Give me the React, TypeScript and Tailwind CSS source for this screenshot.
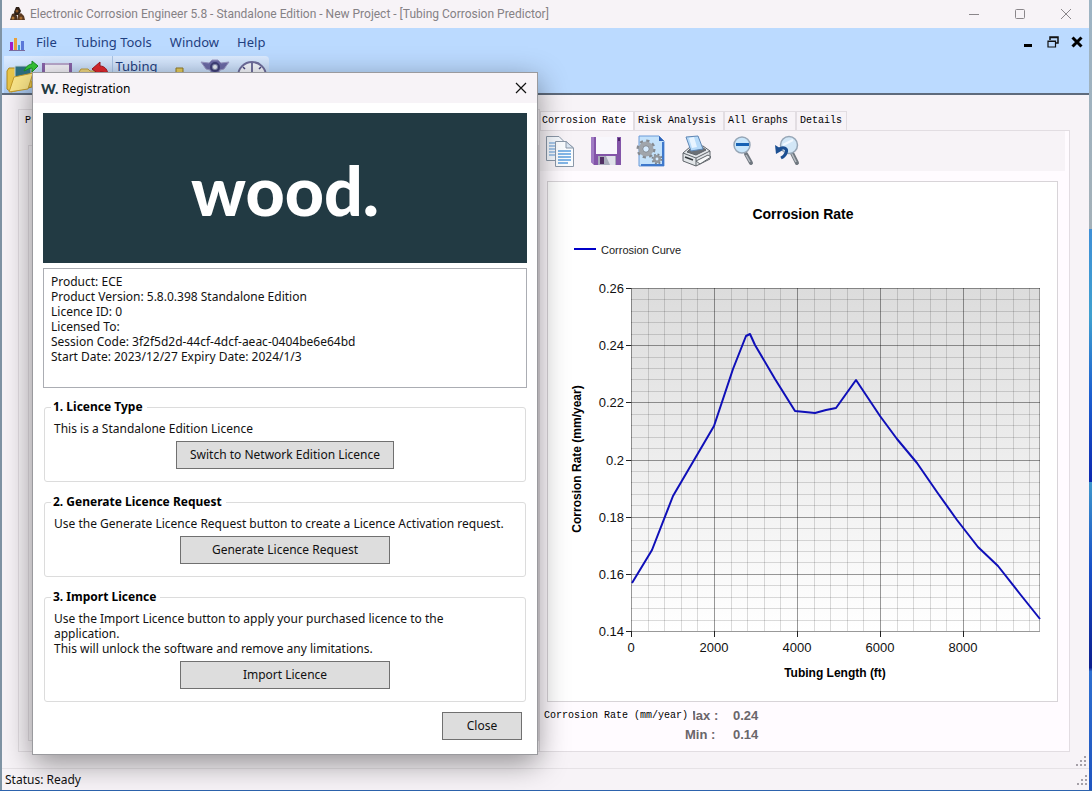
import React from "react";

const UI = "font-['Noto_Sans',sans-serif]";
const MONO = "font-['Liberation_Mono',monospace]";

const curve: [number, number][] = [
  [632, 583], [652, 550], [673, 496], [714, 426], [733, 369], [746, 336], [750, 334], [755, 345],
  [775, 379], [795, 411], [815, 413], [826, 410], [836, 408], [856, 380], [880, 416], [897, 439],
  [917, 463], [937, 492], [957, 520], [978, 547], [998, 566], [1020, 594], [1040, 619],
];
const yLabels = ["0.26", "0.24", "0.22", "0.2", "0.18", "0.16", "0.14"];
const xLabels = ["0", "2000", "4000", "6000", "8000"];
const yLine = (i: number) => Math.round(288 + (i * 343) / 30) + 0.5;
const xLine = (i: number) => Math.round(631 + i * 16.6) + 0.5;

function Chart() {
  const rows = Array.from({ length: 31 }, (_, i) => i);
  const cols = Array.from({ length: 25 }, (_, i) => i);
  return (
    <svg viewBox="548 182 509 519" className="block h-full w-full font-['Liberation_Sans',sans-serif]" role="img" aria-label="Corrosion Rate chart">
      <defs>
        <linearGradient id="plot" x1="0" y1="0" x2="0" y2="1">
          <stop offset="0" stopColor="#dcdcdc" />
          <stop offset="1" stopColor="#ffffff" />
        </linearGradient>
      </defs>
      <text x="803" y="219" textAnchor="middle" fontSize="14" fontWeight="700">Corrosion Rate</text>
      <path d="M574 249H596" stroke="#0000c8" strokeWidth="2" />
      <text x="601" y="254" fontSize="11" fill="#222">Corrosion Curve</text>
      <rect x="631" y="288" width="409" height="343" fill="url(#plot)" />
      {rows.map((i) => (
        <path key={i} d={`M631 ${yLine(i)}H1040`} stroke="#000" strokeOpacity={i % 5 ? 0.14 : 0.4} />
      ))}
      {cols.map((i) => (
        <path key={i} d={`M${xLine(i)} 288V631`} stroke="#000" strokeOpacity={i % 5 ? 0.14 : 0.4} />
      ))}
      <path d="M1039.500 288V631" stroke="#000" strokeOpacity="0.3" />
      {yLabels.map((t, i) => (
        <g key={t}>
          <path d={`M626 ${yLine(i * 5)}H631`} stroke="#222" />
          <text x="624" y={yLine(i * 5) + 4} textAnchor="end" fontSize="13" fill="#111">{t}</text>
        </g>
      ))}
      {xLabels.map((t, i) => (
        <g key={t}>
          <path d={`M${xLine(i * 5)} 631V637`} stroke="#222" />
          <text x={631 + i * 83} y="652" textAnchor="middle" fontSize="13" fill="#111">{t}</text>
        </g>
      ))}
      <polyline points={curve.map((p) => p.join(",")).join(" ")} fill="none" stroke="#0f0fb8" strokeWidth="2" strokeLinejoin="round" />
      <text x="835" y="677" textAnchor="middle" fontSize="12" fontWeight="700">Tubing Length (ft)</text>
      <text transform="translate(581 459) rotate(-90)" textAnchor="middle" fontSize="12" fontWeight="700">Corrosion Rate (mm/year)</text>
    </svg>
  );
}

const CopyIcon = () => (
  <svg viewBox="0 0 32 32" className="size-8">
    <g stroke="#8b98a8" strokeWidth="1">
      <path d="M1.500 1.500H14L18.500 6V25.500H1.500Z" fill="#f6faff" />
      <path d="M4 8H11M4 11H11M4 14H11M4 17H11M4 20H11" stroke="#8fb8e4" strokeWidth="1.500" />
      <path d="M10.500 6.500H21L28.500 13V31.500H10.500Z" fill="#fbfdff" />
      <path d="M21 6.500V13H28.500Z" fill="#dbe6f2" />
      <path d="M13 16H26M13 19H26M13 22H26M13 25H26M13 28H23" stroke="#5c9fe0" strokeWidth="1.500" />
    </g>
  </svg>
);
const SaveIcon = () => (
  <svg viewBox="0 0 32 32" className="size-8">
    <path d="M1 2H31V30H4L1 27Z" fill="#8355a8" />
    <path d="M1 2H4V29L1 27Z" fill="#a07cc4" />
    <path d="M6 2H27V19H6Z" fill="#f8f7fc" />
    <path d="M28 3H30V6H28Z" fill="#4b2468" />
    <path d="M8 21H26V30H8Z" fill="#a9adbb" />
    <path d="M10 22H14V29H10Z" fill="#513064" />
    <path d="M16 21L20 30H25V21Z" fill="#e0e2ea" />
  </svg>
);
const GearDocIcon = () => (
  <svg viewBox="0 0 32 32" className="size-8">
    <path d="M4 1H24L29 6V31H4Z" fill="#c4e2fb" stroke="#6a9ad8" />
    <path d="M24 1V6H29Z" fill="#2f62b8" />
    <path d="M28 7V30H6" fill="none" stroke="#3f78cc" strokeWidth="2" />
    <circle cx="11" cy="14" r="8" fill="none" stroke="#858a90" strokeWidth="3" strokeDasharray="3.100 3.180" />
    <circle cx="11" cy="14" r="5.500" fill="#e4e8ec" stroke="#a0a5ab" strokeWidth="4" />
    <circle cx="11" cy="14" r="3.300" fill="#d7ecff" stroke="#7a7f85" />
    <circle cx="22" cy="24" r="4.500" fill="none" stroke="#7c8187" strokeWidth="2" strokeDasharray="1.800 1.730" />
    <circle cx="22" cy="24" r="2.700" fill="#d7ecff" stroke="#92979d" strokeWidth="2.500" />
  </svg>
);
const PrintIcon = () => (
  <svg viewBox="0 0 32 32" className="size-8" stroke="#5f646a" strokeLinejoin="round">
    <path d="M3 18L10 12L23 11L30 16V24L16 31L3 26Z" fill="#e2e5e8" />
    <path d="M7 17L11 13L22 12L26 15L16 20Z" fill="#6b7076" />
    <path d="M6 2L18 1L23 14L11 16Z" fill="#b7dbfa" stroke="#5f86b4" />
    <path d="M9 3L14 2L17 12L12 13Z" fill="#e8f4ff" stroke="none" />
    <path d="M3 18L16 23L30 16M16 23V31" fill="none" />
    <path d="M16 26L28 20L31 22L20 29Z" fill="#f7f8f9" />
    <path d="M5 22L13 25" stroke="#33383d" strokeWidth="1.500" />
  </svg>
);
const ZoomOutIcon = () => (
  <svg viewBox="0 0 32 32" className="size-8">
    <path d="M21 19L26 28" stroke="#70777f" strokeWidth="4" strokeLinecap="round" />
    <path d="M21 20L25 27" stroke="#b8bdc4" strokeWidth="1.500" />
    <circle cx="17" cy="10" r="8" fill="#c9e6fb" stroke="#97a6b6" strokeWidth="1.500" />
    <path d="M11 8H24V11H11Z" fill="#1762b4" />
  </svg>
);
const ZoomUndoIcon = () => (
  <svg viewBox="0 0 32 32" className="size-8">
    <path d="M22 18L27 28" stroke="#70777f" strokeWidth="4" strokeLinecap="round" />
    <path d="M22 19L26 27" stroke="#b8bdc4" strokeWidth="1.500" />
    <circle cx="19" cy="10" r="8.500" fill="#d3e7f7" stroke="#97a6b6" strokeWidth="1.500" />
    <path d="M13 10L23 5" stroke="#f2f9ff" strokeWidth="2" />
    <path d="M9 14C14 11 18 14 16 18C15 21 13 22 11 23" fill="none" stroke="#1c4f92" strokeWidth="3" />
    <path d="M5 10L6 19L13 15Z" fill="#1c4f92" />
  </svg>
);

const tools = [
  { label: "Copy", Icon: CopyIcon },
  { label: "Save", Icon: SaveIcon },
  { label: "Settings", Icon: GearDocIcon },
  { label: "Print", Icon: PrintIcon },
  { label: "Zoom out", Icon: ZoomOutIcon },
  { label: "Reset zoom", Icon: ZoomUndoIcon },
];

const OpenIcon = () => (
  <svg viewBox="0 0 32 34" className="h-[34px] w-8">
    <path d="M1 11L3 8H10L12 11H26V27L5 32L1 29Z" fill="#e9c64a" stroke="#b08a20" />
    <path d="M9 6H25V21H9Z" fill="#2e6f80" stroke="#c3d6dd" />
    <path d="M3 32L8 17L27 13L22 29Z" fill="#fbe68a" stroke="#c59c2c" />
    <path d="M18 11C20 6 24 4 26 4V1L32 6L26 12V8C23 8 21 10 18 11Z" fill="#35c435" stroke="#1c8a24" />
  </svg>
);
const DiskIcon = () => (
  <svg viewBox="0 0 32 34" className="h-[34px] w-8">
    <path d="M1 3H31V32H1Z" fill="#8863a8" />
    <path d="M4 3H28V20H4Z" fill="#f3f1f8" />
    <path d="M4 3H28V5H4Z" fill="#b9a8cc" />
  </svg>
);
const UndoIcon = () => (
  <svg viewBox="0 0 32 34" className="h-[34px] w-8">
    <path d="M1 12L3 9H10L12 11H26V30H1Z" fill="#f0d780" stroke="#c0a040" />
    <path d="M14 9L22 2V6C27 6 30 10 30 16C27 12 25 12 22 12V15Z" fill="#e0282e" stroke="#a01820" />
  </svg>
);
const BlockIcon = () => (
  <svg viewBox="0 0 32 34" className="h-[34px] w-8">
    <path d="M14 10H21V30H14Z" fill="#e4cb5c" stroke="#8f7a28" />
  </svg>
);
const ValveIcon = () => (
  <svg viewBox="0 0 32 34" className="h-[34px] w-8">
    <path d="M3 4L11 5L14 2H20L23 5L31 4L26 11L22 12L20 16H14L12 12L8 11Z" fill="#6b6aa6" stroke="#9c9bc6" />
    <circle cx="17" cy="9" r="4" fill="#8f96b8" stroke="#3f3f78" strokeWidth="2" />
    <circle cx="17" cy="9" r="2" fill="#e8ecf4" />
  </svg>
);
const ClockIcon = () => (
  <svg viewBox="0 0 32 34" className="h-[34px] w-8">
    <circle cx="17" cy="18" r="14" fill="#f4f6fc" stroke="#6f6d9c" strokeWidth="2" />
    <path d="M17 5V18M8 9L10 11M26 9L24 11" stroke="#4a4880" strokeWidth="1.500" />
  </svg>
);

const iconButton = "flex h-9 w-[45px] shrink-0 items-start justify-center pr-1";
const push =
  "flex items-center justify-center self-center border border-[#707070] bg-[#dddddd] text-[12px] leading-4 text-[#111]";

function Step({ title, lines, action, size }: { title: string; lines: string[]; action: string; size: string }) {
  return (
    <fieldset className="mx-px min-w-0 rounded-[3px] border border-[#dcdcdc]">
      <legend className="ml-1.5 pl-0.5 pr-1 text-[12px] font-bold leading-4 text-black">{title}</legend>
      <div className="flex flex-col gap-[5px] px-[9px] pb-3 pt-1.5">
        <div className="pr-[10px]">
          {lines.map((l) => (
            <p key={l}>{l}</p>
          ))}
        </div>
        <button type="button" className={`${push} ${size}`}>{action}</button>
      </div>
    </fieldset>
  );
}

function RegistrationDialog() {
  return (
    <section
      role="dialog"
      aria-label="Registration"
      className={`absolute left-8 top-[72px] z-20 w-[506px] border border-[#9a9a9e] bg-white text-[12px] leading-[15px] text-[#111] shadow-[0_8px_28px_rgba(0,0,0,0.42)] ${UI}`}
    >
      <header className="flex h-[30px] items-center bg-[#f7f3f7] px-2">
        <span className="w-[21px] font-['Lato',sans-serif] text-[14px] font-black text-[#223a43]">W.</span>
        <h2 className="flex-1 text-black">Registration</h2>
        <button type="button" aria-label="Close dialog" className="flex size-4 items-center justify-center">
          <svg viewBox="0 0 12 12" className="size-3" stroke="#111" strokeWidth="1.200"><path d="M1 1L11 11M11 1L1 11" /></svg>
        </button>
      </header>
      <div className="flex flex-col px-[10px] pb-[14px] pt-[10px]">
        <div className="flex h-[150px] items-center justify-center bg-[#223a43] pt-1 font-['Lato',sans-serif] text-[68px] font-black leading-none text-white">
          wood.
        </div>
        <textarea
          readOnly
          aria-label="Licence details"
          className="mt-[5px] block h-[120px] resize-none overflow-hidden border border-[#abadb3] bg-white px-[7px] py-[5px] outline-none"
          value={"Product: ECE\nProduct Version: 5.8.0.398 Standalone Edition\nLicence ID: 0\nLicensed To:\nSession Code: 3f2f5d2d-44cf-4dcf-aeac-0404be6e64bd\nStart Date: 2023/12/27 Expiry Date: 2024/1/3"}
        />
        <div className="mt-[11px] flex flex-col gap-3">
          <Step title="1. Licence Type" lines={["This is a Standalone Edition Licence"]} action="Switch to Network Edition Licence" size="h-7 w-[218px]" />
          <Step title="2. Generate Licence Request" lines={["Use the Generate Licence Request button to create a Licence Activation request."]} action="Generate Licence Request" size="h-7 w-[210px]" />
          <Step
            title="3. Import Licence"
            lines={["Use the Import Licence button to apply your purchased licence to the application.", "This will unlock the software and remove any limitations."]}
            action="Import Licence"
            size="h-7 w-[210px]"
          />
        </div>
        <button type="button" className={`${push} mr-[5px] mt-[10px] h-7 w-20 !self-end`}>Close</button>
      </div>
    </section>
  );
}

const Grip = () => (
  <svg viewBox="0 0 10 10" className="size-[10px] shrink-0" fill="#a5a0a8">
    <path d="M8 0h2v2h-2zM4 4h2v2h-2zM8 4h2v2h-2zM0 8h2v2h-2zM4 8h2v2h-2zM8 8h2v2h-2z" />
  </svg>
);

const tab = "h-[19px] border border-b-0 border-[#e2dde2] px-[3px] text-left leading-[18px]";

export default function App() {
  return (
    <div className={`relative flex h-screen overflow-hidden bg-[#2d63ad] pb-px text-black ${UI}`}>
      <div className="w-0.5 shrink-0 bg-[#7f93a4]" />
      <div className="flex min-w-0 flex-1 flex-col bg-[#f7f3f7]">
        <header className="flex h-7 shrink-0 items-center pl-[7px] pr-[17px]">
          <svg viewBox="0 0 16 16" className="mr-[5px] size-4">
            <path d="M1 14L3 8L6 7L8 10V14Z" fill="#4a3020" />
            <path d="M5 6L7 1H10L12 5L10 9H6Z" fill="#2e2018" />
            <path d="M8 14L9 9L12 7L15 10L16 14Z" fill="#5b3a22" />
            <circle cx="4" cy="12" r="1.500" fill="#b07838" />
            <circle cx="12" cy="12" r="1.500" fill="#a86c30" />
            <circle cx="8" cy="5" r="1.500" fill="#8a5528" />
          </svg>
          <h1 className="flex-1 whitespace-nowrap font-['Roboto',sans-serif] text-[12px] leading-4 text-[#858185]">
            Electronic Corrosion Engineer 5.8 - Standalone Edition - New Project - [Tubing Corrosion Predictor]
          </h1>
          <div className="flex gap-[34px]">
            <button type="button" aria-label="Minimize"><svg viewBox="0 0 12 12" className="size-3" stroke="#8a868a"><path d="M1 6.500H11" /></svg></button>
            <button type="button" aria-label="Maximize"><svg viewBox="0 0 12 12" className="size-3" stroke="#8a868a" fill="none"><rect x="1.500" y="1.500" width="9" height="9" rx="1" /></svg></button>
            <button type="button" aria-label="Close"><svg viewBox="0 0 12 12" className="size-3" stroke="#8a868a"><path d="M1 1L11 11M11 1L1 11" /></svg></button>
          </div>
        </header>
        <nav className="flex h-7 shrink-0 items-center bg-[#bbdaff] pl-[7px] pr-1.5 text-[13px] leading-4 text-[#1f4080]">
          <svg viewBox="0 0 16 14" className="mr-[11px] mt-1 h-[14px] w-4">
            <path d="M1 5H4V13H1Z" fill="#a01cc8" />
            <path d="M5 1H8V13H5Z" fill="#e8a13c" />
            <path d="M9 8H11V13H9Z" fill="#3ca0d8" />
            <path d="M12 4H15V13H12Z" fill="#5a78d8" />
            <path d="M0 13.500H16" stroke="#7a6a9c" />
          </svg>
          <div className="flex flex-1 gap-[18px]">
            <button type="button">File</button>
            <button type="button">Tubing Tools</button>
            <button type="button">Window</button>
            <button type="button">Help</button>
          </div>
          <div className="flex gap-3">
            <button type="button" aria-label="Minimize child"><svg viewBox="0 0 12 12" className="size-3"><path d="M1 8H9V11H1Z" fill="#000" /></svg></button>
            <button type="button" aria-label="Restore child"><svg viewBox="0 0 12 12" className="size-3" fill="none" stroke="#111" strokeWidth="1.200"><path d="M3 4V1H11V7H9M3 1.500H11" strokeWidth="1.500" /><path d="M1 5H8.500V11H1ZM1 5.500H8.500" /></svg></button>
            <button type="button" aria-label="Close child"><svg viewBox="0 0 12 12" className="size-3" stroke="#000" strokeWidth="3"><path d="M1.500 1.500L10.500 10.500M10.500 1.500L1.500 10.500" /></svg></button>
          </div>
        </nav>
        <div className="flex h-[37px] shrink-0 bg-[#bbdaff] pl-0.5">
          <div className="flex w-[265px] rounded-r-sm bg-linear-to-b from-[#dcebff] to-[#a9c8ee] text-[13px] leading-5 text-[#1f4080]">
            <button type="button" aria-label="Open" className="flex w-[35px] items-center justify-center pt-1"><OpenIcon /></button>
            <button type="button" aria-label="Save project" className="flex w-[36px] items-center justify-center pt-1"><DiskIcon /></button>
            <button type="button" aria-label="Undo" className="flex w-[37px] items-center justify-center pt-1"><UndoIcon /></button>
            <button type="button" className="flex w-[48px] items-start justify-center border-l border-[#a9c4e6]">Tubing</button>
            <button type="button" aria-label="Profile" className="flex w-9 items-center justify-center"><BlockIcon /></button>
            <button type="button" aria-label="Valve" className="flex w-9 items-center justify-center"><ValveIcon /></button>
            <button type="button" aria-label="History" className="flex w-[37px] items-center justify-center"><ClockIcon /></button>
          </div>
        </div>
        <main className="flex min-h-0 flex-1 border-t-2 border-[#5f6b7c] pl-4 pr-[19px]">
          <section className="flex w-[522px] shrink-0 flex-col pb-4 pt-[14px]">
            <div className={`flex min-h-0 flex-1 flex-col border border-[#e2dde2] ${MONO}`}>
              <button type="button" className="h-[35px] pb-[14px] pl-1.5 text-left text-[10px] leading-5">Pr</button>
              <div className="mb-[10px] ml-[9px] flex-1 border border-[#e2dde2]" />
            </div>
          </section>
          <section className="flex min-w-0 flex-1 flex-col pb-4 pt-4">
            <div role="tablist" className={`flex items-end whitespace-nowrap text-[10px] ${MONO}`}>
              <button type="button" role="tab" aria-selected="true" className={`${tab} w-[94px] bg-[#fffbff] !pl-px`}>Corrosion Rate</button>
              <button type="button" role="tab" className={`${tab} w-[90px]`}>Risk Analysis</button>
              <button type="button" role="tab" className={`${tab} w-[72px]`}>All Graphs</button>
              <button type="button" role="tab" className={`${tab} w-[51px]`}>Details</button>
            </div>
            <div className="flex min-h-0 flex-1 flex-col border border-l-0 border-[#e2dde2] bg-[#fffbff]">
              <div className="mr-1 flex h-10 shrink-0 items-center bg-[#f7f3f7] pt-1">
                {tools.map(({ label, Icon }) => (
                  <button key={label} type="button" aria-label={label} className={iconButton}><Icon /></button>
                ))}
              </div>
              <div className="ml-[7px] mr-[11px] mt-[10px] min-h-0 flex-1 border border-[#d8d4d8] bg-white">
                <Chart />
              </div>
              <div className="h-[49px] shrink-0 pl-1 pt-1 font-['Liberation_Sans',sans-serif] text-[13px] leading-[19px] text-[#6a666a]">
                <dl className="flex">
                  <dt className="flex">
                    <span className={`z-10 w-[149px] shrink-0 whitespace-nowrap bg-[#fffbff] text-[10px] text-black ${MONO}`}>Corrosion Rate (mm/year)</span>
                    <span className="-ml-2 w-12 font-bold">Max :</span>
                  </dt>
                  <dd className="font-bold">0.24</dd>
                </dl>
                <dl className="flex pl-[141px] font-bold">
                  <dt className="w-12">Min :</dt>
                  <dd>0.14</dd>
                </dl>
              </div>
            </div>
          </section>
          <div className="-mr-4 flex w-4 shrink-0 items-end justify-end pb-0.5"><Grip /></div>
        </main>
        <footer className="flex h-[22px] shrink-0 items-center justify-between border-t border-[#e6e2e6] pl-[3px] pr-0.5 text-[12px] leading-4 text-[#111]">
          <span>Status: Ready</span>
          <Grip />
        </footer>
      </div>
      <div className="w-[3px] shrink-0 bg-[linear-gradient(#9db4c4_0%,#a3b0b8_29%,#3f8fd6_29%,#3fa0cf_40%,#1c5fd0_50%,#0c28b0_61%,#3f97cc_61%,#1850c8_72%,#0c1f90_84.500%,#2e6fd0_85%,#1f55c0_100%)]" />
      <RegistrationDialog />
    </div>
  );
}
